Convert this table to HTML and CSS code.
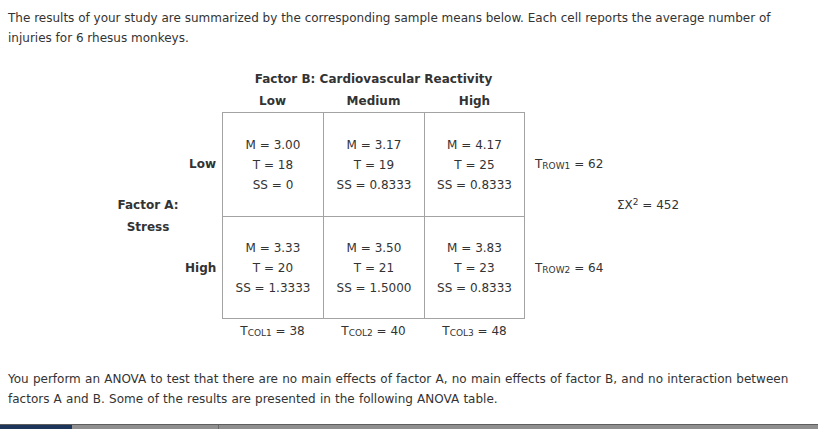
FILE: index.html
```html
<!DOCTYPE html>
<html lang="en">
<head>
<meta charset="utf-8">
<title>Two-factor design</title>
<link rel="stylesheet" href="styles.css">
</head>
<body>
<div class="page">
  <p class="text">The results of your study are summarized by the corresponding sample means below. Each cell reports the average number of injuries for 6 rhesus monkeys.</p>

  <div class="design">
    <div class="title">Factor B: Cardiovascular Reactivity</div>
    <div class="collabel col-1">Low</div>
    <div class="collabel col-2">Medium</div>
    <div class="collabel col-3">High</div>

    <div class="factor-a"><div>Factor A:</div><div>Stress</div></div>

    <div class="rowlabel row-1">Low</div>
    <div class="cell row-1 col-1"><div>M = 3.00</div><div>T = 18</div><div>SS = 0</div></div>
    <div class="cell row-1 col-2"><div>M = 3.17</div><div>T = 19</div><div>SS = 0.8333</div></div>
    <div class="cell row-1 col-3 last-col"><div>M = 4.17</div><div>T = 25</div><div>SS = 0.8333</div></div>
    <div class="rowtotal row-1">T<sub>ROW1</sub> = 62</div>

    <div class="rowlabel row-2">High</div>
    <div class="cell row-2 col-1 last-row"><div>M = 3.33</div><div>T = 20</div><div>SS = 1.3333</div></div>
    <div class="cell row-2 col-2 last-row"><div>M = 3.50</div><div>T = 21</div><div>SS = 1.5000</div></div>
    <div class="cell row-2 col-3 last-row last-col"><div>M = 3.83</div><div>T = 23</div><div>SS = 0.8333</div></div>
    <div class="rowtotal row-2">T<sub>ROW2</sub> = 64</div>

    <div class="sumsq">&Sigma;X<sup>2</sup> = 452</div>

    <div class="coltotal col-1">T<sub>COL1</sub> = 38</div>
    <div class="coltotal col-2">T<sub>COL2</sub> = 40</div>
    <div class="coltotal col-3">T<sub>COL3</sub> = 48</div>
  </div>

  <p class="text after">You perform an ANOVA to test that there are no main effects of factor A, no main effects of factor B, and no interaction between factors A and B. Some of the results are presented in the following ANOVA table.</p>
</div>
<div class="toolbar">
  <div class="toolbar-logo"></div>
  <div class="toolbar-seg"></div>
  <div class="toolbar-rest"></div>
</div>
</body>
</html>
```

FILE: styles.css
```css
html, body {
  margin: 0;
  padding: 0;
  background: #ffffff;
}

body {
  font-family: "DejaVu Sans", Verdana, sans-serif;
  font-size: 12px;
  color: #333333;
}

.page {
  padding: 8px 8px 0 8px;
}

.text {
  margin: 0;
  line-height: 20px;
}

.text.after {
  margin-top: 29px;
  word-spacing: 0.4px;
}

.design {
  margin-top: 21px;
  display: grid;
  grid-template-columns: 177px 37px 101px 101px 101px 92px 1fr;
  grid-template-rows: 20px 23px 104px 103px 21px;
  line-height: 20px;
}

.title {
  grid-column: 3 / 6;
  grid-row: 1;
  text-align: center;
  font-weight: bold;
}

.collabel {
  grid-row: 2;
  text-align: center;
  font-weight: bold;
  padding-top: 2px;
}

.col-1 { grid-column: 3; }
.col-2 { grid-column: 4; }
.col-3 { grid-column: 5; }
.row-1 { grid-row: 3; }
.row-2 { grid-row: 4; }

.factor-a {
  grid-column: 1;
  grid-row: 3 / 5;
  align-self: center;
  padding-left: 103px;
  text-align: center;
  font-weight: bold;
  line-height: 22px;
}

.rowlabel {
  grid-column: 2;
  align-self: center;
  text-align: right;
  padding-right: 6px;
  font-weight: bold;
}

.cell {
  display: flex;
  flex-direction: column;
  justify-content: center;
  align-items: center;
  border-top: 1px solid #a3a3a3;
  border-left: 1px solid #a3a3a3;
}

.cell.last-col {
  border-right: 1px solid #a3a3a3;
}

.cell.last-row {
  border-bottom: 1px solid #a3a3a3;
}

.rowtotal {
  grid-column: 6;
  align-self: center;
  padding-left: 10px;
}

.sumsq {
  grid-column: 7;
  grid-row: 3 / 5;
  align-self: center;
  padding-bottom: 22px;
}

.coltotal {
  grid-row: 5;
  text-align: center;
  padding-top: 2px;
}

sub {
  font-size: 9px;
  vertical-align: -1px;
  line-height: 0;
}

sup {
  font-size: 9px;
  vertical-align: 4px;
  line-height: 0;
}

.toolbar {
  margin-top: 15px;
  height: 5px;
  display: flex;
  box-sizing: border-box;
  border-top: 1px solid #5e5e5e;
  background: #8f8f8f;
}

.toolbar-logo {
  width: 72px;
  background: #1d355b;
}

.toolbar-seg {
  width: 146px;
  border-right: 1px solid #6a6a6a;
}

.toolbar-rest {
  flex: 1;
}
```
